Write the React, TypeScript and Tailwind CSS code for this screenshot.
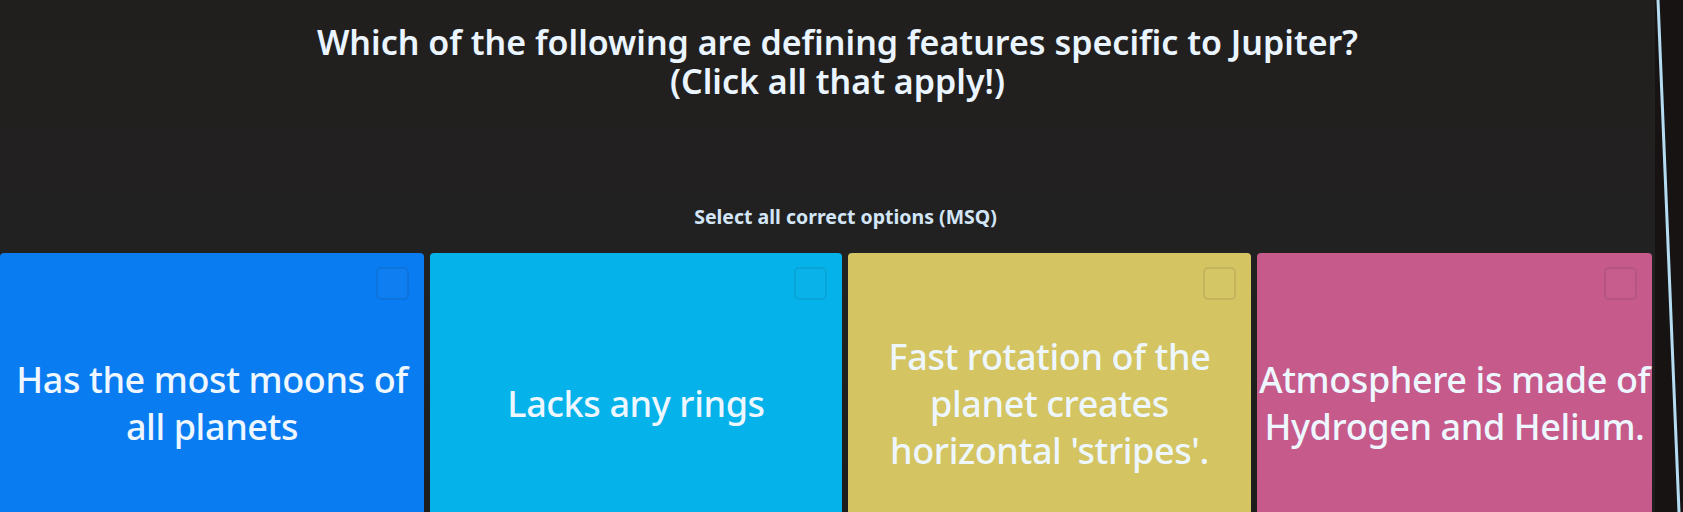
import React from "react";

interface Option {
  id: string;
  text: string[];
  bg: string;
}

const options: Option[] = [
  { id: "a", text: ["Has the most moons of", "all planets"], bg: "bg-[#0a7cf1]" },
  { id: "b", text: ["Lacks any rings"], bg: "bg-[#05b2ea]" },
  { id: "c", text: ["Fast rotation of the", "planet creates", "horizontal 'stripes'."], bg: "bg-[#d4c462]" },
  { id: "d", text: ["Atmosphere is made of", "Hydrogen and Helium."], bg: "bg-[#c65a8b]" },
];

function OptionCard({ option }: { option: Option }) {
  return (
    <div className={`relative h-[300px] rounded-[4px] ${option.bg} flex items-center justify-center px-1`}>
      {/* checkbox */}
      <div className="absolute top-[14px] right-[15px] w-[33px] h-[33px] rounded-[5px] border-2 border-black/[0.08] bg-white/[0.02]"></div>
      <p className="text-center text-[36px] leading-[47px] tracking-[-0.4px] font-medium text-[#eef7ff]">
        {option.text.map((line, i) => (
          <span key={i} className="block whitespace-nowrap">
            {line}
          </span>
        ))}
      </p>
    </div>
  );
}

export default function App() {
  return (
    <div
      className="w-[1683px] h-[512px] overflow-hidden flex bg-[#171313]"
      style={{ fontFamily: '"Noto Sans", "Open Sans", sans-serif' }}
    >
      <main className="w-[1655px] flex flex-col bg-gradient-to-b from-[#211f1e] via-[#222121] to-[#1d1d1e]">
        {/* Question */}
        <header className="pt-[23px] pl-[20px] text-center">
          <h1 className="text-[34px] leading-[39px] font-semibold text-[#eaf5ff]">
            <span className="block">Which of the following are defining features specific to Jupiter?</span>
            <span className="block">(Click all that apply!)</span>
          </h1>
        </header>

        <p className="mt-[104px] pl-[36px] text-center text-[19.5px] leading-[24px] font-bold text-[#d3e6f7]">
          Select all correct options (MSQ)
        </p>

        {/* Answer options */}
        <div className="mt-[24px] grid grid-cols-[424px_412px_403px_395px] gap-[6px]">
          {options.map((o) => (
            <OptionCard key={o.id} option={o} />
          ))}
        </div>
      </main>

      {/* screen edge */}
      <div className="flex-1 relative">
        <svg className="absolute inset-0 w-full h-full" viewBox="0 0 28 512" preserveAspectRatio="none">
          <line x1="3" y1="0" x2="24" y2="512" stroke="#b4ddf2" strokeWidth="3" />
        </svg>
      </div>
    </div>
  );
}
